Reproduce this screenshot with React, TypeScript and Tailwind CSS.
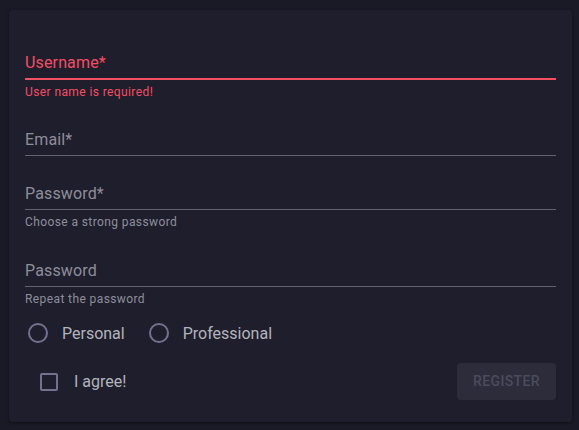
export default function App() {
  return (
    <div className="min-h-[430px] bg-[#1a1a27] pt-[10px] pl-[9px] font-['Roboto',sans-serif]">
      <div className="w-[563px] h-[412px] rounded bg-[#1e1e2d] px-4 pt-[43px] shadow-[0_1px_3px_rgba(0,0,0,0.4)]">
        {/* Username (error) */}
        <div className="border-b-2 border-[#f64e62] pb-[6px]">
          <span className="block text-[16px] leading-[19px] tracking-[0.15px] text-[#f64e62]">Username*</span>
        </div>
        <p className="mt-[4px] text-[12px] leading-[16px] tracking-[0.4px] text-[#f64e62]">User name is required!</p>

        {/* Email */}
        <div className="mt-[30px] border-b border-[#626270] pb-[6px]">
          <span className="block text-[16px] leading-[19px] tracking-[0.15px] text-[#8e8e99]">Email*</span>
        </div>

        {/* Password */}
        <div className="mt-[28px] border-b border-[#626270] pb-[6px]">
          <span className="block text-[16px] leading-[19px] tracking-[0.15px] text-[#8e8e99]">Password*</span>
        </div>
        <p className="mt-[4px] text-[12px] leading-[16px] tracking-[0.4px] text-[#8e8e99]">Choose a strong password</p>

        {/* Repeat password */}
        <div className="mt-[31px] border-b border-[#626270] pb-[6px]">
          <span className="block text-[16px] leading-[19px] tracking-[0.15px] text-[#8e8e99]">Password</span>
        </div>
        <p className="mt-[4px] text-[12px] leading-[16px] tracking-[0.4px] text-[#8e8e99]">Repeat the password</p>

        {/* Account type */}
        <div className="mt-[16px] flex items-center h-5 pl-[3px]">
          <div className="flex items-center gap-[14px]">
            <span className="w-5 h-5 rounded-full border-2 border-[#74718e]" />
            <span className="text-[16px] leading-[19px] text-[#b4b4bb]">Personal</span>
          </div>
          <div className="ml-[24px] flex items-center gap-[14px]">
            <span className="w-5 h-5 rounded-full border-2 border-[#74718e]" />
            <span className="text-[16px] leading-[19px] text-[#b4b4bb]">Professional</span>
          </div>
        </div>

        {/* Agree + submit */}
        <div className="mt-[20px] flex items-center justify-between">
          <div className="flex items-center gap-4 pl-[15px]">
            <span className="w-[18px] h-[18px] rounded-[2px] border-2 border-[#74718e]" />
            <span className="text-[16px] leading-[19px] text-[#b4b4bb]">I agree!</span>
          </div>
          <button
            disabled
            className="w-[99px] h-[37px] rounded bg-[#2d2c3b] text-[14px] font-medium tracking-[0.4px] text-[#4c4b5c]"
          >
            REGISTER
          </button>
        </div>
      </div>
    </div>
  );
}
